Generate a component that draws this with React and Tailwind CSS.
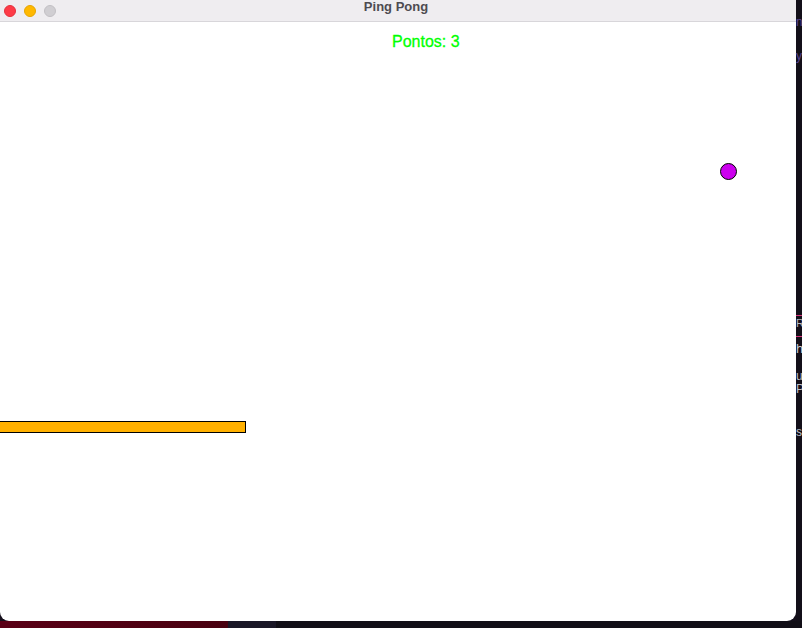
import React from "react";

export default function App() {
  return (
    <div className="w-[802px] h-[628px] flex flex-col bg-[#15101c] overflow-hidden" style={{ fontFamily: '"Liberation Sans", Arial, sans-serif' }}>
      <div className="flex h-[621px]">
        <div className="w-[796px] h-[621px] flex flex-col bg-white rounded-b-[9px] overflow-hidden">
          <div className="h-[22px] shrink-0 bg-[#efedf0] border-b border-[#d8d6da] flex items-center relative">
            <div className="flex items-center gap-[8px] pl-[4px]">
              <span className="w-[12px] h-[12px] rounded-full bg-[#fe3b47] border border-[#e5303c]"></span>
              <span className="w-[12px] h-[12px] rounded-full bg-[#ffb800] border border-[#e6a500]"></span>
              <span className="w-[12px] h-[12px] rounded-full bg-[#d0ced2] border border-[#c2c0c4]"></span>
            </div>
            <div className="absolute left-0 right-0 top-0 h-[14px] flex justify-center text-[13px] leading-[14px] font-bold text-[#4d4b50] pr-[4px]">Ping Pong</div>
          </div>
          <div className="relative flex-1">
            <div className="absolute left-[392px] top-[12px] text-[16px] leading-none text-[#00ff00] [-webkit-text-stroke:0.3px_#00ff00]">Pontos: 3</div>
            <div className="absolute left-[720px] top-[141px] w-[17px] h-[17px] rounded-full bg-[#cc00ee] border border-black"></div>
            <div className="absolute left-0 top-[399px] w-[246px] h-[12px] bg-[#ffb000] border border-l-0 border-black"></div>
          </div>
        </div>
        <div className="relative w-[6px] h-full bg-[#130f19] text-[12px] leading-none">
          <span className="absolute left-[0px] top-[16px] text-[#5c4490]">n</span>
          <span className="absolute left-[0px] top-[50px] text-[#5c4490]">y</span>
          <div className="absolute left-0 top-[315px] w-full h-[1px] bg-[#d6337a]"></div>
          <span className="absolute left-[0px] top-[318px] text-[#b8b8c0] text-[11px]">R</span>
          <div className="absolute left-0 top-[336px] w-full h-[1px] bg-[#d6337a]"></div>
          <span className="absolute left-[0px] top-[342px] text-[#d0d0d8] text-[13px]">h</span>
          <span className="absolute left-[0px] top-[370px] text-[#c0c0c8] text-[12px]">u</span>
          <span className="absolute left-[0px] top-[383px] text-[#c0c0c8] text-[12px]">P</span>
          <span className="absolute left-[0px] top-[426px] text-[#c0c0c8] text-[12px]">s</span>
        </div>
      </div>
      <div className="flex h-[7px]">
        <div className="w-[228px] bg-gradient-to-r from-[#5a0016] to-[#48000f]"></div>
        <div className="w-[48px] bg-[#1a1626]"></div>
        <div className="flex-1 bg-[#110e16]"></div>
      </div>
    </div>
  );
}
